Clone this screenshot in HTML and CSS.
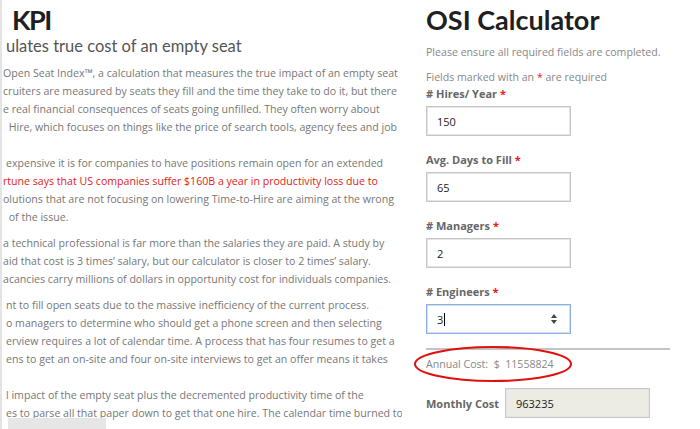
FILE: index.html
```html
<!DOCTYPE html>
<html>
<head>
<meta charset="utf-8">
<link rel="stylesheet" href="styles.css">
</head>
<body>
<div class="page">
  <div class="left">
    <h1 class="kpi">KPI</h1>
    <div class="subtitle">ulates true cost of an empty seat</div>
    <div class="para p1 flush">
      <div class="ln cut">Open Seat Index™, a calculation that measures the true impact of an empty seat</div>
      <div class="ln cut">cruiters are measured by seats they fill and the time they take to do it, but there</div>
      <div class="ln cut">e real financial consequences of seats going unfilled. They often worry about</div>
      <div class="ln">&nbsp;Hire, which focuses on things like the price of search tools, agency fees and job</div>
      <div class="ln"></div>
    </div>
    <div class="para">
      <div class="ln">expensive it is for companies to have positions remain open for an extended</div>
      <div class="ln red cut">rtune says that US companies suffer $160B a year in productivity loss due to</div>
      <div class="ln cut">olutions that are not focusing on lowering Time-to-Hire are aiming at the wrong</div>
      <div class="ln">&nbsp;of the issue.</div>
    </div>
    <div class="para">
      <div class="ln cut">a technical professional is far more than the salaries they are paid. A study by</div>
      <div class="ln cut">aid that cost is 3 times’ salary, but our calculator is closer to 2 times’ salary.</div>
      <div class="ln cut">acancies carry millions of dollars in opportunity cost for individuals companies.</div>
    </div>
    <div class="para flush">
      <div class="ln">nt to fill open seats due to the massive inefficiency of the current process.</div>
      <div class="ln">o managers to determine who should get a phone screen and then selecting</div>
      <div class="ln">erview requires a lot of calendar time. A process that has four resumes to get a</div>
      <div class="ln">ens to get an on-site and four on-site interviews to get an offer means it takes</div>
      <div class="ln"></div>
    </div>
    <div class="para">
      <div class="ln">l impact of the empty seat plus the decremented productivity time of the</div>
      <div class="ln">es to parse all that paper down to get that one hire. The calendar time burned to</div>
    </div>
    <div class="greybar"></div>
  </div>
  <div class="right">
    <h1 class="title">OSI Calculator</h1>
    <p class="note">Please ensure all required fields are completed.</p>
    <p class="note req">Fields marked with an <span class="star">*</span> are required</p>
    <div class="field">
      <label class="lbl"># Hires/ Year <span class="star">*</span></label>
      <div class="box">150</div>
    </div>
    <div class="field">
      <label class="lbl">Avg. Days to Fill <span class="star">*</span></label>
      <div class="box">65</div>
    </div>
    <div class="field">
      <label class="lbl"># Managers <span class="star">*</span></label>
      <div class="box">2</div>
    </div>
    <div class="field">
      <label class="lbl"># Engineers <span class="star">*</span></label>
      <div class="box focus"><span class="val">3</span><span class="caret"></span>
        <svg class="spin" width="8" height="12" viewBox="0 0 8 12"><path d="M4 1 L7 5 H1 Z M4 11 L7 7 H1 Z" fill="#444"/></svg>
      </div>
    </div>
    <div class="rule"></div>
    <div class="annual">Annual Cost:&nbsp; $&nbsp; 11558824
      <svg class="ellipse" width="160" height="38" viewBox="0 0 160 38"><ellipse cx="80" cy="19" rx="78" ry="17" fill="none" stroke="#e01010" stroke-width="2"/></svg>
    </div>
    <div class="monthly">
      <span class="mlbl">Monthly Cost</span>
      <div class="box ro">963235</div>
    </div>
  </div>
</div>
</body>
</html>
```
FILE: styles.css
```css
html, body {
  margin: 0;
  padding: 0;
  background: #fff;
}
body {
  font-family: "Open Sans", "Liberation Sans", sans-serif;
  color: #777;
}
.page {
  display: flex;
  height: 429px;
  overflow: hidden;
  border-left: 2px solid #e4e4e4;
  box-sizing: border-box;
}
.left {
  width: 400px;
  flex: none;
  overflow: hidden;
  padding-left: 4px;
  box-sizing: border-box;
  position: relative;
}
.kpi {
  font-family: "Lato", "Inter", sans-serif;
  font-weight: 700;
  font-size: 27px;
  letter-spacing: -1.5px;
  color: #1f1f1f;
  margin: 5px 0 0 6px;
  line-height: 30px;
}
.subtitle {
  font-family: "Lato", sans-serif;
  font-size: 16.5px;
  color: #555;
  margin-top: 2px;
  line-height: 18px;
}
.para {
  font-size: 10.6px;
  line-height: 18px;
  margin-bottom: 8px;
}
.flush {
  margin-bottom: 0;
}
.p1 {
  margin-top: 9px;
}
.ln {
  white-space: nowrap;
  height: 18px;
}
.cut {
  margin-left: -3px;
}
.red {
  color: #e2231a;
}
.greybar {
  position: absolute;
  left: 6px;
  top: 418px;
  width: 98px;
  height: 14px;
  background: #e6e6e6;
}
.right {
  padding-left: 24px;
  flex: 1;
  position: relative;
}
.title {
  font-family: "Lato", "Inter", sans-serif;
  font-weight: 700;
  font-size: 27px;
  color: #1f1f1f;
  margin: 5px 0 0 0;
  line-height: 30px;
}
.note {
  font-size: 10.6px;
  margin: 10px 0 0 0;
  line-height: 15px;
  color: #888;
}
.req {
  margin-top: 10px;
}
.star {
  color: #e62020;
}
.field {
  display: flex;
  flex-direction: column;
  margin-bottom: 15px;
}
.lbl {
  font-weight: 700;
  font-size: 11px;
  color: #666;
  line-height: 18px;
  margin-bottom: 3px;
}
.box {
  width: 145px;
  height: 30px;
  box-sizing: border-box;
  border: 1px solid #c6c6c6;
  box-shadow: inset 0 0 0 1px #e4e4e4;
  font-size: 11px;
  color: #222;
  padding-left: 10px;
  display: flex;
  align-items: center;
  position: relative;
}
.focus {
  border-color: #8fb0e0;
  box-shadow: inset 0 0 0 1px #cfdff5;
}
.caret {
  width: 1px;
  height: 13px;
  background: #000;
  margin-left: 1px;
}
.spin {
  position: absolute;
  right: 12px;
  top: 8px;
}
.rule {
  width: 244px;
  height: 2px;
  background: #c4c4c4;
  margin-top: -1px;
}
.annual {
  position: relative;
  font-size: 10.6px;
  color: #888;
  margin-top: 6px;
  line-height: 16px;
}
.ellipse {
  position: absolute;
  left: -13px;
  top: -11px;
}
.monthly {
  display: flex;
  align-items: center;
  margin-top: 16px;
}
.mlbl {
  font-weight: 700;
  font-size: 11px;
  color: #666;
  width: 79px;
}
.ro {
  background: #ecebe4;
  border-color: #c8c8c8;
}
```
